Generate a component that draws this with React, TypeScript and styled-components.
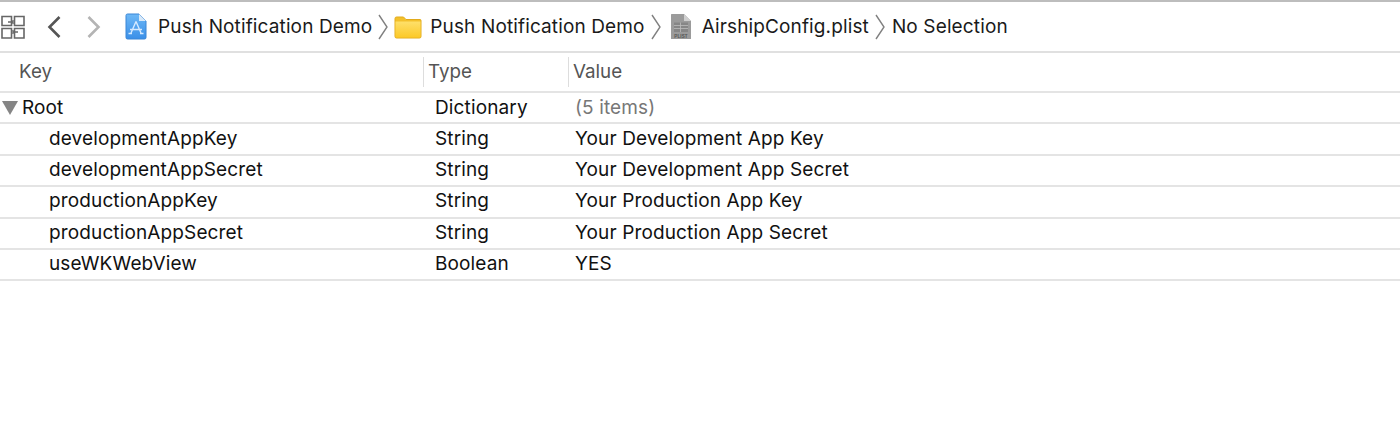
import styled, { createGlobalStyle } from "styled-components";

const GlobalStyle = createGlobalStyle`
    html, body {
        margin: 0;
        padding: 0;
        background: #fff;
    }
    body {
        font-family: "Inter", "Liberation Sans", sans-serif;
        color: #111;
    }
`;

type Row = { key: string; type: string; value: string; root?: boolean };

const rows: Row[] = [
    { key: "Root", type: "Dictionary", value: "(5 items)", root: true },
    { key: "developmentAppKey", type: "String", value: "Your Development App Key" },
    { key: "developmentAppSecret", type: "String", value: "Your Development App Secret" },
    { key: "productionAppKey", type: "String", value: "Your Production App Key" },
    { key: "productionAppSecret", type: "String", value: "Your Production App Secret" },
    { key: "useWKWebView", type: "Boolean", value: "YES" },
];

const GridIcon = () => (
    <svg width="24" height="24" viewBox="0 0 24 24" fill="none" stroke="#666" strokeWidth="1.6">
        <path d="M1 1.5h9.5v9H1z" />
        <path d="M13.5 1.5H23v9h-9.5z" />
        <path d="M1 13.5h9.5v9.5H1z" />
        <path d="M13.5 13.5H23v9.5h-9.5z" />
        <path d="M7 7h5M12 5v4M12 17h5M12 15v4" strokeWidth="1.3" />
    </svg>
);

const Chevron = ({ back, color }: { back?: boolean; color: string }) => (
    <svg width="14" height="24" viewBox="0 0 14 24" fill="none" stroke={color} strokeWidth="2.6">
        <path d={back ? "M12.5 2 L2.5 12 L12.5 22" : "M1.5 2 L11.5 12 L1.5 22"} />
    </svg>
);

const AppFileIcon = () => (
    <svg width="22" height="27" viewBox="0 0 22 27">
        <defs>
            <linearGradient id="appFile" x1="0" y1="0" x2="0" y2="1">
                <stop offset="0" stopColor="#6db8f6" />
                <stop offset="1" stopColor="#3a8fe8" />
            </linearGradient>
        </defs>
        <path d="M1 2.5Q1 1 2.5 1H14L21 8V24.5Q21 26 19.5 26H2.5Q1 26 1 24.5Z" fill="url(#appFile)" stroke="#3b86d6" strokeWidth="1" />
        <path d="M14 1L21 8H14Z" fill="#d8e9f9" />
        <g stroke="#d6eaff" strokeWidth="1.4" fill="none">
            <path d="M11 8.5L6 20M11 8.5L16 20M5 16.5H17" />
            <path d="M3.5 20.5H7M15 20.5H18.5" />
        </g>
    </svg>
);

const FolderIcon = () => (
    <svg width="28" height="24" viewBox="0 0 28 24">
        <defs>
            <linearGradient id="folderFront" x1="0" y1="0" x2="0" y2="1">
                <stop offset="0" stopColor="#fee06a" />
                <stop offset="1" stopColor="#fcc928" />
            </linearGradient>
        </defs>
        <path d="M1 3.5Q1 2 2.5 2H9.5L12 4.5H26Q27 4.5 27 5.5V21.5Q27 23 25.5 23H2.5Q1 23 1 21.5Z" fill="#f3c02a" stroke="#e2ab1c" strokeWidth="1" />
        <path d="M1.5 6.5H26.5V21.5Q26.5 22.5 25.5 22.5H2.5Q1.5 22.5 1.5 21.5Z" fill="url(#folderFront)" />
    </svg>
);

const PlistIcon = () => (
    <svg width="22" height="27" viewBox="0 0 22 27">
        <path d="M1 1.5Q1 1 1.5 1H14L21 8V25.5Q21 26 20.5 26H1.5Q1 26 1 25.5Z" fill="#9b9b9b" />
        <path d="M14 1L21 8H14Z" fill="#cfcfcf" />
        <path d="M4 9.5H18V19H4Z" fill="#868686" />
        <path d="M4 12.5H18M4 15.5H18M10.5 9.5V19" stroke="#bdbdbd" strokeWidth="0.8" />
        <text x="11" y="24.5" fontSize="4.5" fontWeight="700" textAnchor="middle" fill="#555" fontFamily="Liberation Sans, sans-serif">
            PLIST
        </text>
    </svg>
);

const Separator = () => (
    <svg width="12" height="26" viewBox="0 0 12 26" fill="none" stroke="#808080" strokeWidth="1.4">
        <path d="M2 1 L10 13 L2 25" />
    </svg>
);

const Crumb = ({ icon, label, gap, inset }: { icon?: React.ReactNode; label: string; gap?: number; inset?: number }) => (
    <CrumbItem $gap={gap ?? 0} $inset={inset ?? 0}>
        {icon}
        <span>{label}</span>
    </CrumbItem>
);

export default function App() {
    return (
        <Page>
            <GlobalStyle />
            <Toolbar>
                <GridButton>
                    <GridIcon />
                </GridButton>
                <NavButton>
                    <Chevron back color="#555" />
                </NavButton>
                <NavButton>
                    <Chevron color="#b4b4b4" />
                </NavButton>
                <Crumbs>
                    <Crumb icon={<AppFileIcon />} label="Push Notification Demo" gap={11} />
                    <Separator />
                    <Crumb icon={<FolderIcon />} label="Push Notification Demo" gap={8} />
                    <Separator />
                    <Crumb icon={<PlistIcon />} label="AirshipConfig.plist" gap={10} inset={3} />
                    <Separator />
                    <Crumb label="No Selection" inset={1} />
                </Crumbs>
            </Toolbar>
            <HeaderRow>
                <HeaderCell>Key</HeaderCell>
                <HeaderCell $divider>Type</HeaderCell>
                <HeaderCell $divider>Value</HeaderCell>
            </HeaderRow>
            {rows.map((row) => (
                <PlistRow key={row.key} $root={row.root}>
                    <KeyCell $root={row.root}>
                        {row.root && <Disclosure />}
                        {row.key}
                    </KeyCell>
                    <TypeCell>{row.type}</TypeCell>
                    <ValueCell $muted={row.root}>{row.value}</ValueCell>
                </PlistRow>
            ))}
        </Page>
    );
}

const Page = styled.div`
    width: 1400px;
    height: 436px;
    overflow: hidden;
    background: #fff;
`;

const Toolbar = styled.div`
    display: flex;
    align-items: center;
    height: 49px;
    border-top: 2px solid #bdbdbd;
    border-bottom: 2px solid #e0e0e0;
`;

const GridButton = styled.div`
    display: flex;
    margin-left: 1px;
    margin-right: 22px;
`;

const NavButton = styled.div`
    display: flex;
    margin-right: 26px;
`;

const Crumbs = styled.div`
    display: flex;
    align-items: center;
    gap: 5px;
    margin-left: -2px;
    font-size: 19px;
    letter-spacing: 0.13px;
    color: #1a1a1a;
`;

const CrumbItem = styled.div<{ $gap: number; $inset: number }>`
    display: flex;
    align-items: center;
    gap: ${(p) => p.$gap}px;
    margin-left: ${(p) => p.$inset}px;
    white-space: nowrap;
`;

const HeaderRow = styled.div`
    display: grid;
    grid-template-columns: 423px 145px 1fr;
    align-items: center;
    height: 38px;
    border-bottom: 2px solid #e4e4e4;
    font-size: 18.8px;
    color: #555;
`;

const HeaderCell = styled.div<{ $divider?: boolean }>`
    height: 30px;
    line-height: 30px;
    padding-left: ${(p) => (p.$divider ? "4px" : "19px")};
    border-left: ${(p) => (p.$divider ? "1px solid #ddd" : "none")};
`;

const PlistRow = styled.div<{ $root?: boolean }>`
    display: grid;
    grid-template-columns: 435px 140px 1fr;
    align-items: center;
    box-sizing: border-box;
    height: 31.4px;
    padding-bottom: ${(p) => (p.$root ? "0" : "2px")};
    border-bottom: 2px solid #e4e4e4;
    font-size: 19px;
    letter-spacing: 0.13px;
    color: #111;
`;

const KeyCell = styled.div<{ $root?: boolean }>`
    display: flex;
    align-items: center;
    padding-left: ${(p) => (p.$root ? "2px" : "49px")};
`;

const Disclosure = styled.span`
    width: 0;
    height: 0;
    margin-right: 4px;
    border-left: 8px solid transparent;
    border-right: 8px solid transparent;
    border-top: 14px solid #858585;
`;

const TypeCell = styled.div``;

const ValueCell = styled.div<{ $muted?: boolean }>`
    color: ${(p) => (p.$muted ? "#777" : "#111")};
`;
